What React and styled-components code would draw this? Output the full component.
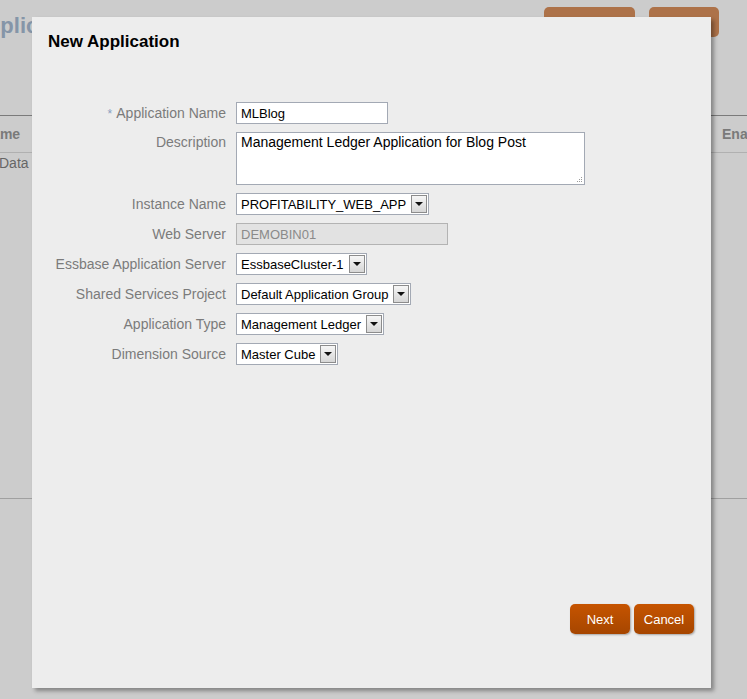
import { styled, createGlobalStyle } from 'styled-components';

const GlobalStyle = createGlobalStyle`
  html, body {
    margin: 0;
    padding: 0;
    background: #cccccc;
    font-family: "Liberation Sans", Arial, sans-serif;
    overflow: hidden;
  }
`;

const fields = [
  { label: 'Instance Name', value: 'PROFITABILITY_WEB_APP' },
  { label: 'Essbase Application Server', value: 'EssbaseCluster-1' },
  { label: 'Shared Services Project', value: 'Default Application Group' },
  { label: 'Application Type', value: 'Management Ledger' },
  { label: 'Dimension Source', value: 'Master Cube' },
];

const Select = ({ value }) => (
  <SelectBox>
    <SelectValue>{value}</SelectValue>
    <ArrowButton>
      <Triangle />
    </ArrowButton>
  </SelectBox>
);

const App = () => {
  const [instance, ...rest] = fields;

  return (
    <>
      <GlobalStyle />
      <Page>
        <TopBar>
          <PageTitle>Applications</PageTitle>
          <ToolButtons>
            <GhostButton width="91px" />
            <GhostButton width="70px" />
          </ToolButtons>
        </TopBar>
        <Table>
          <HeaderRow>
            <NameHeader>Name</NameHeader>
            <EnabledHeader>Enabled</EnabledHeader>
          </HeaderRow>
          <DataRow>
            <DataCell>Data</DataCell>
          </DataRow>
        </Table>
        <BottomRule />
      </Page>

      <Dialog>
        <DialogTitle>New Application</DialogTitle>
        <Form>
          <Label>
            <Required>*</Required>Application Name
          </Label>
          <TextInput width="152px" defaultValue="MLBlog" />

          <Label top>Description</Label>
          <AreaWrap>
            <TextArea defaultValue="Management Ledger Application for Blog Post" />
            <Grip width="7" height="7" viewBox="0 0 7 7">
              <rect x="5" y="1" width="1" height="1" fill="#9a9a9a" />
              <rect x="3" y="3" width="1" height="1" fill="#9a9a9a" />
              <rect x="5" y="3" width="1" height="1" fill="#9a9a9a" />
              <rect x="1" y="5" width="1" height="1" fill="#9a9a9a" />
              <rect x="3" y="5" width="1" height="1" fill="#9a9a9a" />
              <rect x="5" y="5" width="1" height="1" fill="#9a9a9a" />
            </Grip>
          </AreaWrap>

          <Label>{instance.label}</Label>
          <Select value={instance.value} />

          <Label>Web Server</Label>
          <TextInput width="212px" defaultValue="DEMOBIN01" disabled />

          {rest.map(({ label, value }) => (
            <Row key={label}>
              <Label>{label}</Label>
              <Select value={value} />
            </Row>
          ))}
        </Form>
        <Footer>
          <ActionButton type="button">Next</ActionButton>
          <ActionButton type="button">Cancel</ActionButton>
        </Footer>
      </Dialog>
    </>
  );
};

export default App;

const Page = styled.div`
  width: 747px;
  height: 699px;
  overflow: hidden;
  display: flex;
  flex-direction: column;
`;

const TopBar = styled.div`
  display: flex;
  justify-content: space-between;
  align-items: flex-start;
  padding: 7px 28px 0 0;
  height: 115px;
  box-sizing: border-box;
`;

const PageTitle = styled.h1`
  margin: 6px 0 0 -29px;
  font-size: 22px;
  font-weight: bold;
  line-height: 26px;
  color: #8595a8;
`;

const ToolButtons = styled.div`
  display: flex;
  gap: 14px;
`;

const GhostButton = styled.div`
  width: ${({ width }) => width};
  height: 30px;
  border-radius: 5px;
  background: #ad7249;
`;

const Table = styled.div`
  display: flex;
  flex-direction: column;
`;

const HeaderRow = styled.div`
  display: flex;
  justify-content: space-between;
  align-items: center;
  height: 38px;
  box-sizing: border-box;
  border-top: 1px solid #7a7a7a;
  border-bottom: 1px solid #b0b0b0;
  font-size: 14px;
  font-weight: bold;
  color: #7a7a7a;
`;

const NameHeader = styled.span`
  margin-left: -18px;
`;

const EnabledHeader = styled.span`
  width: 25px;
  overflow: hidden;
  white-space: nowrap;
`;

const DataRow = styled.div`
  display: flex;
  height: 20px;
  align-items: center;
`;

const DataCell = styled.span`
  margin-left: -1px;
  font-size: 14px;
  color: #666;
`;

const BottomRule = styled.div`
  margin-top: 325px;
  border-top: 1px solid #a0a0a0;
`;

const Dialog = styled.div`
  position: absolute;
  left: 32px;
  top: 17px;
  width: 679px;
  height: 671px;
  box-sizing: border-box;
  background: #ededed;
  box-shadow: 3px 3px 4px rgba(0, 0, 0, 0.35);
  display: flex;
  flex-direction: column;
  padding: 15px 17px 54px 0;
`;

const DialogTitle = styled.h2`
  margin: 0 0 0 16px;
  font-size: 17px;
  font-weight: bold;
  line-height: 20px;
  color: #000;
`;

const Form = styled.div`
  margin-top: 50px;
  display: grid;
  grid-template-columns: 194px auto;
  column-gap: 10px;
  row-gap: 8px;
  justify-items: start;
`;

const Row = styled.div`
  display: contents;
`;

const Label = styled.label`
  justify-self: end;
  align-self: ${({ top }) => (top ? 'start' : 'center')};
  font-size: 14px;
  line-height: 20px;
  color: #7b7b7b;
  white-space: nowrap;
`;

const Required = styled.span`
  color: #8a9dc0;
  font-size: 12px;
  margin-right: 4px;
`;

const TextInput = styled.input`
  width: ${({ width }) => width};
  height: 22px;
  box-sizing: border-box;
  margin: 0;
  padding: 0 4px;
  border: 1px solid #a3a9b4;
  background: #fff;
  font-family: inherit;
  font-size: 13px;
  color: #000;
  outline: none;

  &:disabled {
    background: #e2e2e2;
    border-color: #b3b3b3;
    color: #8a8a8a;
  }
`;

const AreaWrap = styled.div`
  position: relative;
  display: flex;
`;

const TextArea = styled.textarea`
  width: 349px;
  height: 53px;
  box-sizing: border-box;
  margin: 0;
  padding: 1px 4px;
  border: 1px solid #a3a9b4;
  background: #fff;
  font-family: inherit;
  font-size: 14px;
  line-height: 17px;
  color: #000;
  outline: none;
  resize: none;
`;

const Grip = styled.svg`
  position: absolute;
  right: 2px;
  bottom: 2px;
`;

const SelectBox = styled.div`
  display: inline-flex;
  align-items: center;
  height: 22px;
  box-sizing: border-box;
  padding: 0 1px 0 4px;
  border: 1px solid #a3a9b4;
  background: #fff;
  font-size: 13px;
  color: #000;
`;

const SelectValue = styled.span`
  margin-right: 5px;
  white-space: nowrap;
`;

const ArrowButton = styled.span`
  display: flex;
  align-items: center;
  justify-content: center;
  width: 16px;
  height: 18px;
  box-sizing: border-box;
  border: 1px solid #8c8c8c;
  background: linear-gradient(#f6f6f6, #d6d6d6);
`;

const Triangle = styled.span`
  width: 0;
  height: 0;
  border-left: 4px solid transparent;
  border-right: 4px solid transparent;
  border-top: 4px solid #111;
`;

const Footer = styled.div`
  margin-top: auto;
  display: flex;
  justify-content: flex-end;
  gap: 4px;
`;

const ActionButton = styled.button`
  width: 60px;
  height: 30px;
  padding: 0;
  border: none;
  border-radius: 5px;
  background: linear-gradient(#c65400, #a64600);
  box-shadow: 1px 1px 2px rgba(0, 0, 0, 0.3);
  color: #fff;
  font-family: inherit;
  font-size: 13px;
`;
